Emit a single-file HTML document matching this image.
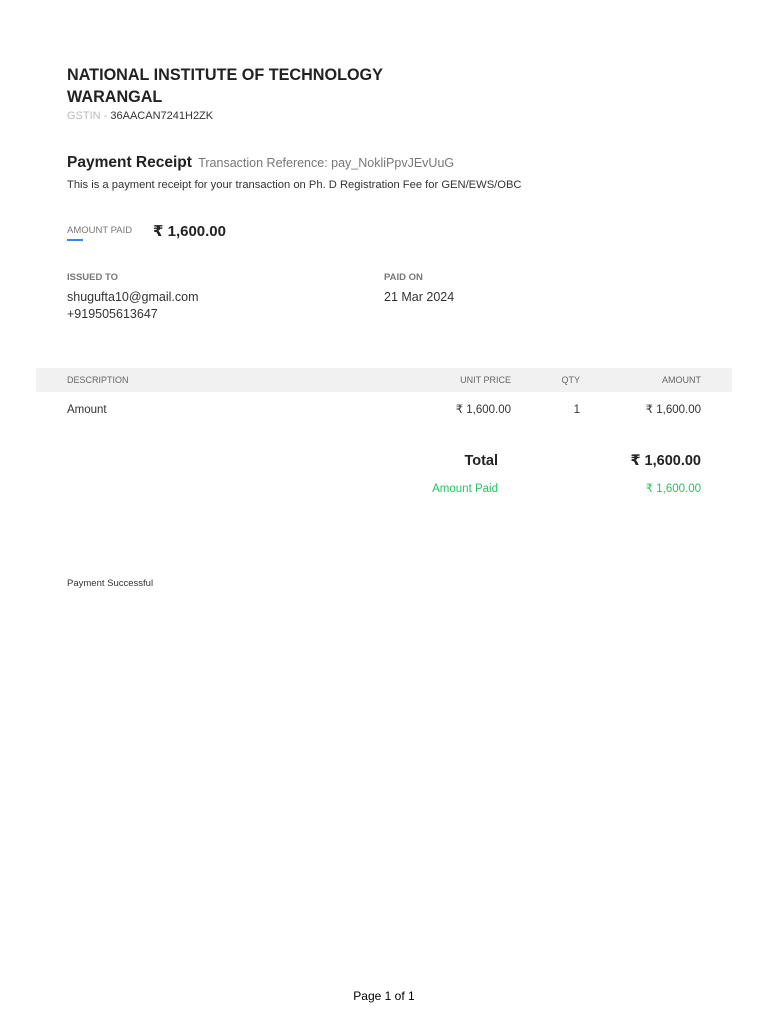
<!DOCTYPE html>
<html><head><meta charset="utf-8"><style>
body{margin:0;width:768px;height:1024px;background:#fff;position:relative;font-family:"Liberation Sans","DejaVu Sans",sans-serif;color:#222;overflow:hidden}
.a{position:absolute;white-space:nowrap;line-height:1}
.r{text-align:right}
</style></head><body>
<div class="a" style="left:67px;top:67px;font-size:16.2px;font-weight:bold;color:#222">NATIONAL INSTITUTE OF TECHNOLOGY</div>
<div class="a" style="left:67px;top:89px;font-size:16.2px;font-weight:bold;color:#222">WARANGAL</div>
<div class="a" style="left:67px;top:111px;font-size:11px;color:#bbb">GSTIN - <span style="color:#333">36AACAN7241H2ZK</span></div>
<div class="a" style="left:67px;top:155px;font-size:15.5px;font-weight:bold;color:#222">Payment Receipt <span style="font-size:12.5px;font-weight:normal;color:#777;margin-left:2px">Transaction Reference: pay_NokliPpvJEvUuG</span></div>
<div class="a" style="left:67px;top:180px;font-size:11.2px;color:#333">This is a payment receipt for your transaction on Ph. D Registration Fee for GEN/EWS/OBC</div>
<div class="a" style="left:67px;top:226px;font-size:9.5px;color:#777">AMOUNT PAID</div>
<div class="a" style="left:67px;top:239px;width:16px;height:2px;background:#3b82f6"></div>
<div class="a" style="left:153px;top:224px;font-size:15px;font-weight:bold;color:#222">₹ 1,600.00</div>
<div class="a" style="left:67px;top:273px;font-size:9.5px;color:#777;font-weight:bold">ISSUED TO</div>
<div class="a" style="left:67px;top:291px;font-size:12.5px;color:#333">shugufta10@gmail.com</div>
<div class="a" style="left:67px;top:308px;font-size:12.5px;color:#333">+919505613647</div>
<div class="a" style="left:384px;top:273px;font-size:9.5px;color:#777;font-weight:bold">PAID ON</div>
<div class="a" style="left:384px;top:291px;font-size:12.5px;color:#333">21 Mar 2024</div>
<div class="a" style="left:36px;top:368px;width:696px;height:24px;background:#f1f1f1"></div>
<div class="a" style="left:67px;top:376px;font-size:9px;color:#666">DESCRIPTION</div>
<div class="a r" style="right:257px;top:376px;font-size:9px;color:#666">UNIT PRICE</div>
<div class="a r" style="right:188px;top:376px;font-size:9px;color:#666">QTY</div>
<div class="a r" style="right:67px;top:376px;font-size:9px;color:#666">AMOUNT</div>
<div class="a" style="left:67px;top:405px;font-size:11.5px;color:#333">Amount</div>
<div class="a r" style="right:257px;top:405px;font-size:11.5px;color:#333">₹ 1,600.00</div>
<div class="a r" style="right:188px;top:405px;font-size:11.5px;color:#333">1</div>
<div class="a r" style="right:67px;top:405px;font-size:11.5px;color:#333">₹ 1,600.00</div>
<div class="a r" style="right:270px;top:454px;font-size:14.5px;font-weight:bold;color:#222">Total</div>
<div class="a r" style="right:67px;top:454px;font-size:14.5px;font-weight:bold;color:#222">₹ 1,600.00</div>
<div class="a r" style="right:270px;top:484px;font-size:11.5px;color:#22c55e">Amount Paid</div>
<div class="a r" style="right:67px;top:484px;font-size:11.5px;color:#22c55e">₹ 1,600.00</div>
<div class="a" style="left:67px;top:579px;font-size:9.5px;color:#333">Payment Successful</div>
<div class="a" style="left:0;width:768px;text-align:center;top:990px;font-size:12px;color:#000">Page 1 of 1</div>
</body></html>
